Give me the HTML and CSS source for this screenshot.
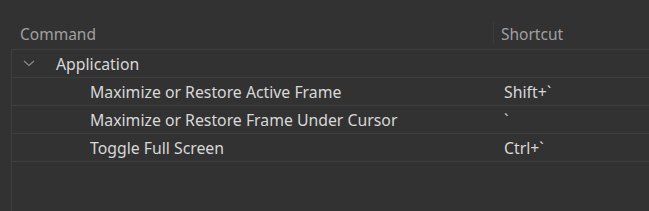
FILE: index.html
```html
<!DOCTYPE html>
<html lang="en">
<head>
    <meta charset="UTF-8">
    <title>Keyboard Shortcuts</title>
    <link rel="stylesheet" href="styles.css">
</head>
<body>
    <div class="shortcuts">
        <div class="head">
            <div class="col-cmd">Command</div>
            <div class="col-key">Shortcut</div>
        </div>
        <div class="list">
            <div class="row group">
                <div class="col-cmd">
                    <svg class="chevron" width="12" height="7" viewBox="0 0 12 7"><path d="M1 1 L6 5.5 L11 1" fill="none" stroke="#8a8a8a" stroke-width="1.1"/></svg>
                    Application
                </div>
                <div class="col-key"></div>
            </div>
            <div class="row item">
                <div class="col-cmd">Maximize or Restore Active Frame</div>
                <div class="col-key">Shift+`</div>
            </div>
            <div class="row item">
                <div class="col-cmd">Maximize or Restore Frame Under Cursor</div>
                <div class="col-key">`</div>
            </div>
            <div class="row item">
                <div class="col-cmd">Toggle Full Screen</div>
                <div class="col-key">Ctrl+`</div>
            </div>
        </div>
    </div>
</body>
</html>
```
FILE: styles.css
```css
html, body {
    height: 211px;
    overflow: hidden;
}
body {
    margin: 0;
    padding: 0;
    background-color: #323232;
    font-family: "Noto Sans", sans-serif;
    font-size: 15.8px;
}
.shortcuts {
    padding-top: 22px;
    padding-left: 11px;
}
.head {
    display: flex;
    height: 27px;
    border-bottom: 1px solid #3e3e3e;
    color: #a0a0a0;
    font-size: 15.5px;
}
.head .col-cmd {
    width: 473px;
    padding-left: 9px;
    padding-top: 1px;
}
.head .col-key {
    border-left: 1px solid #3c3c3c;
    height: 21px;
    padding-left: 7px;
    padding-top: 1px;
}
.list {
    border-left: 1px solid #3e3e3e;
    height: 161px;
}
.row {
    display: flex;
    align-items: center;
    height: 27px;
    border-bottom: 1px solid #3e3e3e;
    color: #d8d8d8;
}
.row .col-cmd {
    width: 492px;
    box-sizing: border-box;
    display: flex;
    align-items: center;
}
.group .col-cmd {
    padding-left: 11px;
}
.chevron {
    margin-right: 21px;
}
.item .col-cmd {
    padding-left: 78px;
}
.row .col-key {
    padding-left: 0;
}
```
